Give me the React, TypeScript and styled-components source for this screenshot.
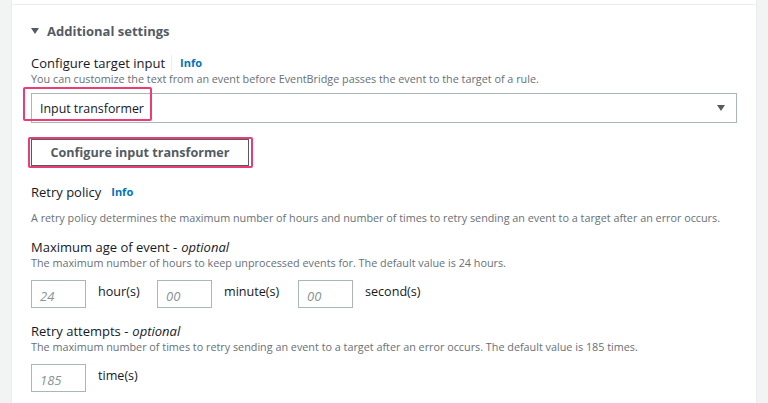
import React from "react";
import styled, { createGlobalStyle } from "styled-components";

const GlobalStyle = createGlobalStyle`
  body {
    margin: 0;
    font-family: "Open Sans", "Liberation Sans", sans-serif;
    color: #16191f;
    background: #f2f3f3;
  }
`;

const Page = styled.div`
  display: flex;
  height: 403px;
  overflow: hidden;
  background: #f2f3f3;
`;

const Card = styled.main`
  flex: 1;
  margin: 0 11px;
  background: #ffffff;
  border-left: 1px solid #eaeded;
  border-right: 1px solid #eaeded;
`;

const TopRule = styled.div`
  height: 4px;
  border-bottom: 1px solid #eaeded;
`;

const Body = styled.div`
  padding: 16px 19px 0 19px;
`;

const Expander = styled.div`
  display: flex;
  align-items: center;
  gap: 8px;
  height: 20px;
  font-size: 13px;
  font-weight: 700;
  color: #545b64;
`;

const Caret = styled.span`
  width: 0;
  height: 0;
  border-left: 4px solid transparent;
  border-right: 4px solid transparent;
  border-top: 6px solid #545b64;
`;

const Field = styled.div<{ $top: number }>`
  margin-top: ${(p) => p.$top}px;
`;

const Label = styled.div`
  display: flex;
  align-items: center;
  font-size: 13px;
  line-height: 18px;
  color: #16191f;

  em {
    font-style: italic;
    margin-left: 4px;
  }
`;

const InfoLink = styled.a<{ $divided?: boolean }>`
  font-size: 11px;
  font-weight: 700;
  color: #0073bb;
  margin-left: ${(p) => (p.$divided ? 6 : 10)}px;
  padding-left: ${(p) => (p.$divided ? 8 : 0)}px;
  border-left: ${(p) => (p.$divided ? "1px solid #eaeded" : "none")};
  line-height: 16px;
`;

const Hint = styled.div<{ $gap?: number }>`
  margin-top: ${(p) => p.$gap ?? 0}px;
  font-size: 10.8px;
  line-height: 14px;
  color: #687078;
  white-space: nowrap;
`;

const Highlight = styled.div<{ $gap?: number }>`
  position: relative;
  margin-top: ${(p) => p.$gap ?? 0}px;
`;

const Marker = styled.span<{ $l: number; $t: number; $w: number; $h: number }>`
  position: absolute;
  left: ${(p) => p.$l}px;
  top: ${(p) => p.$t}px;
  width: ${(p) => p.$w}px;
  height: ${(p) => p.$h}px;
  border: 2px solid #ec3c74;
  border-radius: 2px;
  pointer-events: none;
`;

const Select = styled.div`
  display: flex;
  align-items: center;
  justify-content: space-between;
  height: 28px;
  padding: 0 11px 0 8px;
  border: 1px solid #aab7b8;
  font-size: 12.4px;
  color: #16191f;
`;

const SelectArrow = styled.span`
  width: 0;
  height: 0;
  border-left: 4.5px solid transparent;
  border-right: 4.5px solid transparent;
  border-top: 6px solid #545b64;
`;

const Button = styled.button`
  display: block;
  width: 218px;
  height: 27px;
  border: 1px solid #545b64;
  background: #ffffff;
  font-family: inherit;
  font-size: 12.6px;
  font-weight: 700;
  color: #545b64;
`;

const UnitRow = styled.div`
  display: flex;
  align-items: center;
  margin-top: 10px;
`;

const NumberBox = styled.div`
  width: 55px;
  height: 28px;
  box-sizing: border-box;
  border: 1px solid #aab7b8;
  padding: 6px 8px 0;
  font-size: 13px;
  font-style: italic;
  color: #879596;
`;

const Unit = styled.span<{ $w: number }>`
  box-sizing: border-box;
  width: ${(p) => p.$w}px;
  padding-left: 12px;
  padding-bottom: 6px;
  font-size: 12.6px;
  color: #16191f;
`;

export default function App() {
  return (
    <>
      <GlobalStyle />
      <Page>
        <Card>
          <TopRule />
          <Body>
            <Expander>
              <Caret />
              Additional settings
            </Expander>

            <Field $top={13}>
              <Label>
                Configure target input
                <InfoLink $divided>Info</InfoLink>
              </Label>
              <Hint>
                You can customize the text from an event before EventBridge passes the event to the target of a rule.
              </Hint>
              <Highlight $gap={7}>
                <Select>
                  Input transformer
                  <SelectArrow />
                </Select>
                <Marker $l={-8} $t={-6} $w={125} $h={30} />
              </Highlight>
            </Field>

            <Field $top={16}>
              <Highlight>
                <Button>Configure input transformer</Button>
                <Marker $l={-3} $t={-2} $w={221} $h={27} />
              </Highlight>
            </Field>

            <Field $top={17}>
              <Label>
                Retry policy
                <InfoLink>Info</InfoLink>
              </Label>
              <Hint $gap={10}>
                A retry policy determines the maximum number of hours and number of times to retry sending an event to a target after an error occurs.
              </Hint>
            </Field>

            <Field $top={13}>
              <Label>
                Maximum age of event -<em>optional</em>
              </Label>
              <Hint>The maximum number of hours to keep unprocessed events for. The default value is 24 hours.</Hint>
              <UnitRow>
                <NumberBox>24</NumberBox>
                <Unit $w={71}>hour(s)</Unit>
                <NumberBox>00</NumberBox>
                <Unit $w={86}>minute(s)</Unit>
                <NumberBox>00</NumberBox>
                <Unit $w={90}>second(s)</Unit>
              </UnitRow>
            </Field>

            <Field $top={14}>
              <Label>
                Retry attempts -<em>optional</em>
              </Label>
              <Hint>
                The maximum number of times to retry sending an event to a target after an error occurs. The default value is 185 times.
              </Hint>
              <UnitRow>
                <NumberBox>185</NumberBox>
                <Unit $w={80}>time(s)</Unit>
              </UnitRow>
            </Field>
          </Body>
        </Card>
      </Page>
    </>
  );
}
